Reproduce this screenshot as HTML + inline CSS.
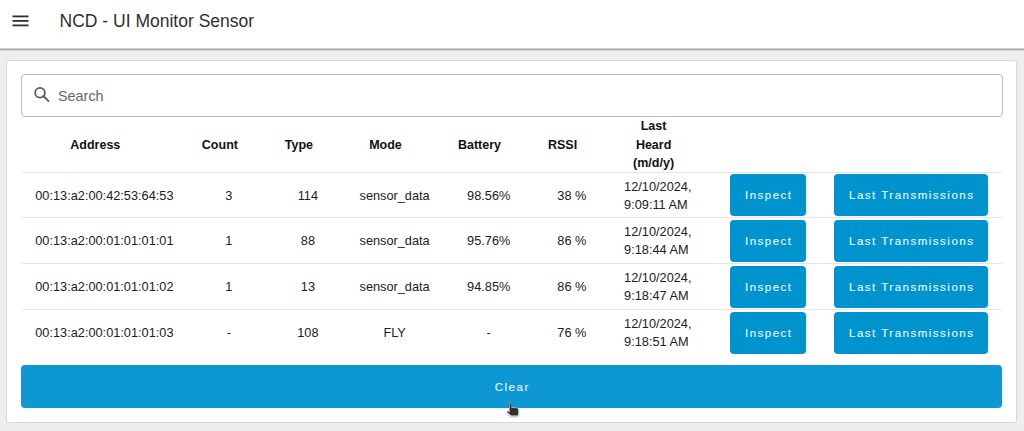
<!DOCTYPE html>
<html><head><meta charset="utf-8">
<style>
html,body{margin:0;padding:0;width:1024px;height:431px;overflow:hidden;background:#eeeeee;font-family:"Liberation Sans",sans-serif;color:#212121;}
.abs{position:absolute;}
#hdr{position:absolute;left:0;top:0;width:1024px;height:48px;background:#fff;}
#shadow{position:absolute;left:0;top:48px;width:1024px;height:3px;background:linear-gradient(#cfcfcf 0,#cfcfcf 1px,#ababab 1px,#ababab 2px,#d6d6d6 2px,#d6d6d6 3px);}
#title{position:absolute;left:59.6px;top:9px;font-size:17.5px;line-height:24px;color:#2e2e2e;white-space:nowrap;}
#card{position:absolute;left:6px;top:60px;width:1009px;height:361px;background:#fff;border:1px solid #d8d8d8;border-radius:3px;}
#search{position:absolute;left:21px;top:74px;width:980px;height:41px;border:1px solid #b8b8b8;border-radius:4px;background:#fff;}
#stext{position:absolute;left:58px;top:86px;font-size:14.4px;line-height:20px;color:#666;}
.h{position:absolute;font-weight:bold;font-size:12.5px;line-height:18px;text-align:center;width:200px;white-space:nowrap;color:#111;}
.c{position:absolute;font-size:12.75px;line-height:18px;text-align:center;width:200px;white-space:nowrap;color:#212121;}
.d{position:absolute;font-size:12.75px;line-height:18px;white-space:nowrap;color:#212121;}
.line{position:absolute;left:22px;width:980px;height:1px;background:#e6e6e6;}
.btn{position:absolute;background:#0094ce;border-radius:4px;color:#eef8fc;font-size:11.5px;font-weight:normal;letter-spacing:1.5px;-webkit-text-stroke:0.1px #eef8fc;text-align:center;line-height:42px;white-space:nowrap;text-indent:1.5px;}
</style></head><body>
<div id="hdr">
  <svg class="abs" style="left:0;top:0" width="40" height="40"><g fill="#2e2e2e"><rect x="12.5" y="15.5" width="16" height="1.8"/><rect x="12.5" y="20.0" width="16" height="1.8"/><rect x="12.5" y="24.5" width="16" height="1.8"/></g></svg>
  <div id="title">NCD - UI Monitor Sensor</div>
</div>
<div id="shadow"></div>
<div id="card"></div>
<div id="search"></div>
<svg class="abs" style="left:30px;top:83px" width="24" height="22" viewBox="0 0 24 22"><circle cx="10" cy="9.7" r="4.85" fill="none" stroke="#5a5a5a" stroke-width="1.8"/><line x1="13.3" y1="13.0" x2="18.5" y2="18.1" stroke="#5a5a5a" stroke-width="1.8" stroke-linecap="round"/></svg>
<div id="stext">Search</div>

<!-- header row -->
<div class="h" style="left:-4.7px;top:135.6px">Address</div>
<div class="h" style="left:119.9px;top:135.6px">Count</div>
<div class="h" style="left:198.9px;top:135.6px">Type</div>
<div class="h" style="left:285.5px;top:135.6px">Mode</div>
<div class="h" style="left:379.5px;top:135.6px">Battery</div>
<div class="h" style="left:462.6px;top:135.6px">RSSI</div>
<div class="h" style="left:553.6px;top:117px">Last</div>
<div class="h" style="left:553.6px;top:135.6px">Heard</div>
<div class="h" style="left:553.6px;top:153.8px">(m/d/y)</div>
<div class="line" style="top:172px"></div>

<!-- row 1 -->
<div class="c" style="left:4.4px;top:186.7px">00:13:a2:00:42:53:64:53</div>
<div class="c" style="left:128.9px;top:186.7px">3</div>
<div class="c" style="left:207.9px;top:186.7px">114</div>
<div class="c" style="left:294.6px;top:186.7px">sensor_data</div>
<div class="c" style="left:388.7px;top:186.7px">98.56%</div>
<div class="c" style="left:471.9px;top:186.7px">38 %</div>
<div class="d" style="left:624.1px;top:177.7px">12/10/2024,<br>9:09:11 AM</div>
<div class="btn" style="left:730px;top:174.2px;width:76px;height:41.4px">Inspect</div>
<div class="btn" style="left:834px;top:174.2px;width:154px;height:41.4px">Last Transmissions</div>
<div class="line" style="top:217px"></div>

<!-- row 2 -->
<div class="c" style="left:4.4px;top:232.2px">00:13:a2:00:01:01:01:01</div>
<div class="c" style="left:128.9px;top:232.2px">1</div>
<div class="c" style="left:207.9px;top:232.2px">88</div>
<div class="c" style="left:294.6px;top:232.2px">sensor_data</div>
<div class="c" style="left:388.7px;top:232.2px">95.76%</div>
<div class="c" style="left:471.9px;top:232.2px">86 %</div>
<div class="d" style="left:624.1px;top:223.2px">12/10/2024,<br>9:18:44 AM</div>
<div class="btn" style="left:730px;top:220.2px;width:76px;height:41.4px">Inspect</div>
<div class="btn" style="left:834px;top:220.2px;width:154px;height:41.4px">Last Transmissions</div>
<div class="line" style="top:263px"></div>

<!-- row 3 -->
<div class="c" style="left:4.4px;top:278.2px">00:13:a2:00:01:01:01:02</div>
<div class="c" style="left:128.9px;top:278.2px">1</div>
<div class="c" style="left:207.9px;top:278.2px">13</div>
<div class="c" style="left:294.6px;top:278.2px">sensor_data</div>
<div class="c" style="left:388.7px;top:278.2px">94.85%</div>
<div class="c" style="left:471.9px;top:278.2px">86 %</div>
<div class="d" style="left:624.1px;top:269.2px">12/10/2024,<br>9:18:47 AM</div>
<div class="btn" style="left:730px;top:266.2px;width:76px;height:41.4px">Inspect</div>
<div class="btn" style="left:834px;top:266.2px;width:154px;height:41.4px">Last Transmissions</div>
<div class="line" style="top:309px"></div>

<!-- row 4 -->
<div class="c" style="left:4.4px;top:324.2px">00:13:a2:00:01:01:01:03</div>
<div class="c" style="left:128.9px;top:324.2px">-</div>
<div class="c" style="left:207.9px;top:324.2px">108</div>
<div class="c" style="left:294.6px;top:324.2px">FLY</div>
<div class="c" style="left:388.7px;top:324.2px">-</div>
<div class="c" style="left:471.9px;top:324.2px">76 %</div>
<div class="d" style="left:624.1px;top:315.2px">12/10/2024,<br>9:18:51 AM</div>
<div class="btn" style="left:730px;top:312.2px;width:76px;height:41.4px">Inspect</div>
<div class="btn" style="left:834px;top:312.2px;width:154px;height:41.4px">Last Transmissions</div>

<div class="btn" style="left:21px;top:365.4px;width:981px;height:42.4px;line-height:44px;background:#0e98d3">Clear</div>
<svg class="abs" style="left:500px;top:396px;filter:drop-shadow(0.6px 1px 0.8px rgba(0,0,0,0.35))" width="24" height="24" viewBox="0 0 24 24"><path d="M9.6,7.6 Q10.6,5.8 11.6,7.6 L11.6,12.2 Q12.6,11.2 13.6,12.2 Q14.6,11.3 15.6,12.3 Q16.6,11.5 17.6,12.5 Q18.3,12.6 18.3,13.4 L18.3,18.6 L17.6,19.4 L11.4,19.4 L7,16 Q6.8,15 7.8,15.2 L9.6,16.2 Z" fill="#303030" stroke="#fff" stroke-width="0.9" paint-order="stroke" stroke-linejoin="round"/></svg>
</body></html>
